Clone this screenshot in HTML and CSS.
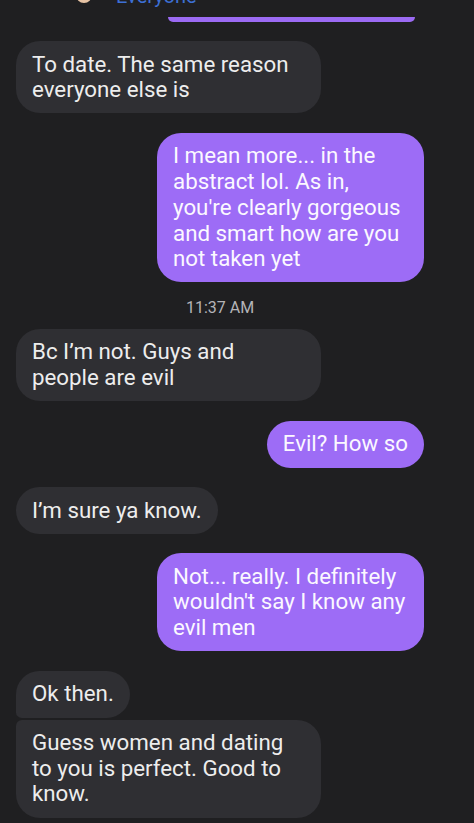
FILE: index.html
```html
<!DOCTYPE html>
<html lang="en">
<head>
  <meta charset="UTF-8" />
  <meta name="viewport" content="width=device-width, initial-scale=1" />
  <title>Messages</title>
  <link rel="stylesheet" href="styles.css">
</head>
<body>
  <div class="top">
    <div class="sender">
      <span class="avatar"></span>
      <span class="sender-name">Everyone</span>
    </div>
    <div class="prev-bubble"></div>
  </div>

  <main class="chat">
    <div class="bubble in full">To date. The same reason everyone else is</div>
    <div class="bubble out">I mean more... in the abstract lol. As in, you're clearly gorgeous and smart how are you not taken yet</div>
    <div class="stamp">11:37 AM</div>
    <div class="bubble in full">Bc I’m not. Guys and people are evil</div>
    <div class="bubble out">Evil? How so</div>
    <div class="bubble in">I’m sure ya know.</div>
    <div class="bubble out">Not... really. I definitely wouldn't say I know any evil men</div>
    <div class="bubble in first">Ok then.</div>
    <div class="bubble in full last">Guess women and dating to you is perfect. Good to know.</div>
  </main>
</body>
</html>
```

FILE: styles.css
```css
* { margin: 0; padding: 0; box-sizing: border-box; }
body {
  font-family: Roboto, "Noto Sans", sans-serif;
  background: #1f1f21;
  color: #ececec;
  overflow: hidden;
}
.top {
  height: 22px;
  overflow: hidden;
}
.sender {
  display: flex;
  align-items: flex-end;
  height: 3px;
  padding-left: 76px;
  gap: 24px;
}
.avatar {
  width: 16px;
  height: 16px;
  border-radius: 50%;
  background: #e7c3a4;
  flex: none;
}
.sender-name {
  font-size: 20px;
  line-height: 20px;
  color: #3d6fd4;
  margin-bottom: -3px;
}
.prev-bubble {
  margin: 14px 0 0 168px;
  width: 247px;
  height: 5px;
  background: #9b6af3;
  border-radius: 0 0 14px 14px;
}
.chat {
  display: flex;
  flex-direction: column;
  gap: 19.5px;
  padding: 19px 50px 0 16px;
}
.bubble {
  font-size: 22.3px;
  line-height: 25.7px;
  padding: 10.5px 16px;
  border-radius: 24px;
}
.in {
  align-self: flex-start;
  max-width: 305px;
  background: #2f2f33;
  color: #ededed;
}
.in.full {
  width: 305px;
  padding-right: 22px;
}
.out {
  align-self: flex-end;
  max-width: 267px;
  background: #9d6cf6;
  color: #fbf8ff;
}
.in.first {
  border-bottom-left-radius: 6px;
}
.in.last {
  margin-top: -17.5px;
  border-top-left-radius: 6px;
}
.stamp {
  align-self: center;
  font-size: 16px;
  line-height: 19px;
  color: #b4b4b8;
  margin: -3.5px 0 -8px;
}
```
